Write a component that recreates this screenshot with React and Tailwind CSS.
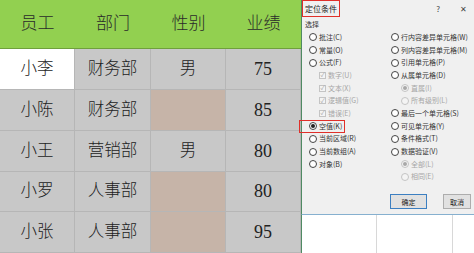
import React from 'react';

const header = ['员工', '部门', '性别', '业绩'];

const rows = [
  [{ t: '小李', bg: 'bg-white' }, { t: '财务部' }, { t: '男' }, { t: '75', n: true }],
  [{ t: '小陈' }, { t: '财务部' }, { t: '', bg: 'bg-[#c6b4a8]' }, { t: '85', n: true }],
  [{ t: '小王' }, { t: '营销部' }, { t: '男' }, { t: '80', n: true }],
  [{ t: '小罗' }, { t: '人事部' }, { t: '', bg: 'bg-[#c6b4a8]' }, { t: '80', n: true }],
  [{ t: '小张' }, { t: '人事部' }, { t: '', bg: 'bg-[#c6b4a8]' }, { t: '95', n: true }],
];

const left = [
  { t: '批注(C)' },
  { t: '常量(O)' },
  { t: '公式(F)' },
  { t: '数字(U)', box: true, on: true, off: true, sub: true },
  { t: '文本(X)', box: true, on: true, off: true, sub: true },
  { t: '逻辑值(G)', box: true, on: true, off: true, sub: true },
  { t: '错误(E)', box: true, on: true, off: true, sub: true },
  { t: '空值(K)', on: true, mark: true },
  { t: '当前区域(R)' },
  { t: '当前数组(A)' },
  { t: '对象(B)' },
  null,
];

const right = [
  { t: '行内容差异单元格(W)' },
  { t: '列内容差异单元格(M)' },
  { t: '引用单元格(P)' },
  { t: '从属单元格(D)' },
  { t: '直属(I)', on: true, off: true, sub: true },
  { t: '所有级别(L)', off: true, sub: true },
  { t: '最后一个单元格(S)' },
  { t: '可见单元格(Y)' },
  { t: '条件格式(T)' },
  { t: '数据验证(V)' },
  { t: '全部(L)', on: true, off: true, sub: true },
  { t: '相同(E)', off: true, sub: true },
];

const Option = ({ o }) => {
  if (!o) return <div />;
  const ctl = o.box ? (
    <span className="w-[7px] h-[7px] border border-[#c4c4c4] bg-[#f4f4f4] flex items-center justify-center text-[6px] leading-none text-[#a0a0a0]">
      ✓
    </span>
  ) : (
    <span
      className={`w-[8px] h-[8px] rounded-full border flex items-center justify-center ${
        o.off ? 'border-[#c4c4c4] bg-[#f4f4f4]' : 'border-[#444] bg-white'
      }`}
    >
      {o.on && <span className={`w-[4px] h-[4px] rounded-full ${o.off ? 'bg-[#a8a8a8]' : 'bg-[#222]'}`} />}
    </span>
  );
  return (
    <div className={`flex items-center h-full ${o.sub ? 'pl-[10px]' : ''}`}>
      <div
        className={`flex items-center gap-[2px] h-[13px] ${
          o.mark ? 'border border-[#e0302a] -ml-[10px] pl-[9px] pr-[2px]' : ''
        }`}
      >
        {ctl}
        <span className={`text-[7px] leading-none whitespace-nowrap ${o.off ? 'text-[#a6a6a6]' : 'text-[#333]'}`}>
          {o.t}
        </span>
      </div>
    </div>
  );
};

export default function App() {
  return (
    <div className="relative w-[474px] h-[253px] overflow-hidden bg-white" style={{ fontFamily: '"Liberation Serif", "Noto Sans CJK SC", serif' }}>
      <div className="w-[301px] grid grid-cols-[75px_76px_75px_75px] grid-rows-[49px_41px_41px_41px_40px_41px] bg-[#c8c8c8]">
        {header.map((h) => (
          <div key={h} className="bg-[#92d050] flex items-center justify-center text-[17px] font-light text-[#2a2a2a] border-b border-[#6fa03c]">
            {h}
          </div>
        ))}
        {rows.flat().map((c, i) => (
          <div
            key={i}
            className={`${c.bg || 'bg-[#c8c8c8]'} border-r border-b border-[#b6b6b6] flex items-center justify-center ${
              c.n ? 'text-[18px]' : 'text-[16.5px] font-light'
            } text-[#222]`}
          >
            {c.t}
          </div>
        ))}
      </div>

      <div className="absolute left-[301px] top-0 w-[173px] h-[215px] bg-[#f0f0f0] border-l border-[#4f8a63] border-b border-b-[#86b0cf] flex flex-col" style={{ fontFamily: '"Noto Sans CJK SC", sans-serif' }}>
        <div className="h-[17px] flex items-center justify-between pr-[7px]">
          <div className="h-[17px] border border-[#e0302a] flex items-center px-[2px] text-[8px] text-[#222]">定位条件</div>
          <div className="flex items-center gap-[20px] text-[8px] text-[#444]">
            <span>?</span>
            <span>✕</span>
          </div>
        </div>
        <div className="h-[10px] mt-[2px] pl-[3px] flex items-center text-[7px] text-[#333]">选择</div>
        <div className="mt-[2px] pl-[7px] grid grid-cols-[82px_1fr] auto-rows-[12.7px]">
          {left.map((o, i) => (
            <React.Fragment key={i}>
              <Option o={o} />
              <Option o={right[i]} />
            </React.Fragment>
          ))}
        </div>
        <div className="mt-[11px] flex justify-end gap-[16px] pr-[3px]">
          <div className="w-[37px] h-[15px] border border-[#3c7fc1] bg-[#e1e1e1] flex items-center justify-center text-[7px] text-[#222]">确定</div>
          <div className="w-[28px] h-[15px] border border-[#adadad] bg-[#e1e1e1] flex items-center justify-center text-[7px] text-[#222]">取消</div>
        </div>
      </div>

      <div className="absolute left-[301px] top-[215px] w-[173px] h-[38px] bg-white border-l border-[#4f8a63] flex">
        <div className="w-[75px] h-full border-r border-[#d8d8d8]" />
        <div className="w-[76px] h-full border-r border-[#d8d8d8]" />
      </div>
    </div>
  );
}
